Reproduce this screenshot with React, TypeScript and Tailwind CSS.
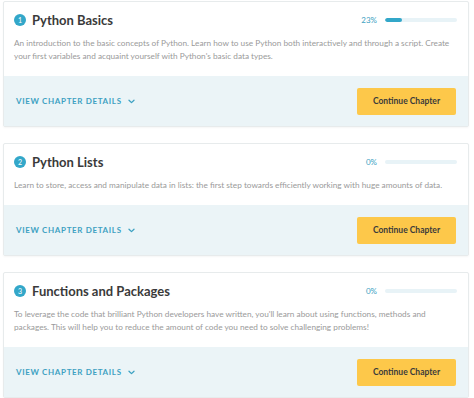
import React from "react";

const chapters = [
  {
    n: 1,
    title: "Python Basics",
    pct: 23,
    desc: "An introduction to the basic concepts of Python. Learn how to use Python both interactively and through a script. Create your first variables and acquaint yourself with Python's basic data types.",
  },
  {
    n: 2,
    title: "Python Lists",
    pct: 0,
    desc: "Learn to store, access and manipulate data in lists: the first step towards efficiently working with huge amounts of data.",
  },
  {
    n: 3,
    title: "Functions and Packages",
    pct: 0,
    desc: "To leverage the code that brilliant Python developers have written, you'll learn about using functions, methods and packages. This will help you to reduce the amount of code you need to solve challenging problems!",
  },
];

function Chevron() {
  return (
    <svg width="7" height="5" viewBox="0 0 7 5" className="ml-[6px]">
      <path d="M1 1.2 L3.5 3.6 L6 1.2" fill="none" stroke="#3da1c2" strokeWidth="1.3" strokeLinecap="round" strokeLinejoin="round" />
    </svg>
  );
}

export default function App() {
  return (
    <div
      className="min-h-[398px] w-[474px] bg-white pl-[3px] pr-[5px] pt-[1px] flex flex-col gap-4"
      style={{ fontFamily: "Lato, 'Open Sans', sans-serif" }}
    >
      {chapters.map((c) => (
        <div
          key={c.n}
          className="border border-[#e7ebec] rounded-[2px] bg-white shadow-[0_1px_2px_rgba(0,0,0,0.04)]"
        >
          <div className="pl-[10px] pr-[11px] pt-[10px] pb-[13px]">
            <div className="flex items-center h-[16px]">
              <div className="w-[12px] h-[12px] rounded-full bg-[#33a7c9] flex items-center justify-center text-white text-[7px] leading-none">
                {c.n}
              </div>
              <div className="ml-[6px] text-[13px] font-bold text-[#3a3a3a] leading-none">{c.title}</div>
              <div className="ml-auto flex items-center">
                <span className="text-[8px] text-[#3da1c2] mr-[8px]">{c.pct}%</span>
                <div className="w-[72px] h-[4px] rounded-full bg-[#e8f3f7] overflow-hidden">
                  <div className="h-full rounded-full bg-[#33a7c9]" style={{ width: `${c.pct}%` }} />
                </div>
              </div>
            </div>
            <p className="mt-[9px] text-[8.25px] leading-[13px] text-[#9a9a9a]">{c.desc}</p>
          </div>
          <div className="bg-[#ebf4f7] h-[50px] px-3 flex items-center justify-between">
            <div className="flex items-center text-[8px] font-bold tracking-[0.65px] text-[#3da1c2]">
              VIEW CHAPTER DETAILS
              <Chevron />
            </div>
            <button className="w-[99px] h-[27px] rounded-[2px] bg-[#fdc84a] text-[8.5px] font-bold text-[#3b3b3b]">
              Continue Chapter
            </button>
          </div>
        </div>
      ))}
    </div>
  );
}
